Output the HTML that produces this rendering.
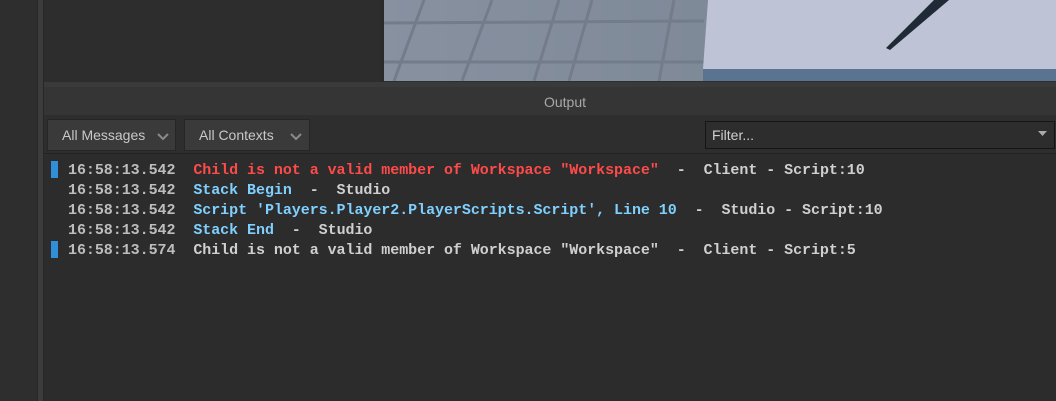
<!DOCTYPE html>
<html><head><style>
*{margin:0;padding:0;box-sizing:border-box}
body{width:1056px;height:401px;background:#2e2e2e;position:relative;overflow:hidden;font-family:"Liberation Sans",sans-serif}
.a{position:absolute}
.row{position:absolute;left:68px;font:bold 15px/20px "Liberation Mono",monospace;letter-spacing:-0.05px;color:#cfcfcf;white-space:pre}
.t{color:#bdbdbd}.r{color:#ff4a4a}.b{color:#7fd0ff}
.mk{position:absolute;left:51px;width:7px;height:17px;background:#2f8fd8}
.dd{position:absolute;top:119px;height:32px;background:#3a3a3a;border:1px solid #262626;color:#c8c8c8;font-size:14px;line-height:30px;padding-left:14px}
.dd svg{position:absolute;top:11px}
</style></head><body>
<div class="a" style="left:37px;top:0;width:7px;height:401px;background:#3c3c3c;border-left:1px solid #272727;border-right:1px solid #272727"></div>
<div class="a" style="left:44px;top:0;width:337px;height:82px;background:#2d2d2d"></div>
<div class="a" style="left:44px;top:82px;width:1012px;height:5px;background:#3a3a3a"></div>
<div class="a" style="left:381px;top:0;width:3px;height:82px;background:#2a2a2a"></div>
<svg class="a" style="left:384px;top:0" width="672" height="81">
<defs><linearGradient id="g" x1="0" x2="1"><stop offset="0" stop-color="#8791a0"/><stop offset="0.75" stop-color="#7a8594"/><stop offset="1" stop-color="#4d5664"/></linearGradient></defs>
<rect width="672" height="81" fill="url(#g)"/>
<g stroke="#727c8a" stroke-width="3" fill="none">
<line x1="0" y1="23" x2="320" y2="21"/><line x1="0" y1="62" x2="320" y2="62"/>
<line x1="40" y1="0" x2="10" y2="81"/><line x1="108" y1="0" x2="78" y2="81"/><line x1="175" y1="0" x2="150" y2="81"/><line x1="208" y1="0" x2="185" y2="81"/><line x1="290" y1="0" x2="275" y2="81"/>
</g>
<polygon points="324,0 672,0 672,69 319,69" fill="#bec4d6"/>
<rect x="319" y="69" width="353" height="12" fill="#5a7391"/>
<polygon points="550,0 565,0 506,50 502,48" fill="#1f2a36"/>
</svg>
<div class="a" style="left:44px;top:87px;width:1012px;height:28px;background:#353535;color:#a8a8a8;font-size:14px;line-height:30px;text-align:center;padding-left:30px">Output</div>
<div class="a" style="left:44px;top:115px;width:1012px;height:39px;background:#2e2e2e;border-bottom:1px solid #222"></div>
<div class="dd" style="left:47px;width:129px">All Messages<svg style="left:108px" width="14" height="10"><path d="M2 3l5 5 5-5" stroke="#8a8a8a" stroke-width="2" fill="none"/></svg></div>
<div class="dd" style="left:184px;width:126px">All Contexts<svg style="left:104px" width="14" height="10"><path d="M2 3l5 5 5-5" stroke="#8a8a8a" stroke-width="2" fill="none"/></svg></div>
<div class="a" style="left:705px;top:121px;width:350px;height:28px;background:#2d2d2d;border:1px solid #151515;color:#d0d0d0;font-size:14px;line-height:26px;padding-left:6px">Filter...<svg style="position:absolute;right:6px;top:9px" width="10" height="6"><path d="M0 0h9l-4.5 5z" fill="#aaa"/></svg></div>
<div class="a" style="left:44px;top:155px;width:1012px;height:246px;background:#2c2c2c"></div>
<div class="mk" style="top:161px"></div>
<div class="mk" style="top:241px"></div>
<div class="row" style="top:161px"><span class="t">16:58:13.542</span>  <span class="r">Child is not a valid member of Workspace "Workspace"</span>  -  Client - Script:10</div>
<div class="row" style="top:181px"><span class="t">16:58:13.542</span>  <span class="b">Stack Begin</span>  -  Studio</div>
<div class="row" style="top:201px"><span class="t">16:58:13.542</span>  <span class="b">Script 'Players.Player2.PlayerScripts.Script', Line 10</span>  -  Studio - Script:10</div>
<div class="row" style="top:221px"><span class="t">16:58:13.542</span>  <span class="b">Stack End</span>  -  Studio</div>
<div class="row" style="top:241px"><span class="t">16:58:13.574</span>  Child is not a valid member of Workspace "Workspace"  -  Client - Script:5</div>
</body></html>
